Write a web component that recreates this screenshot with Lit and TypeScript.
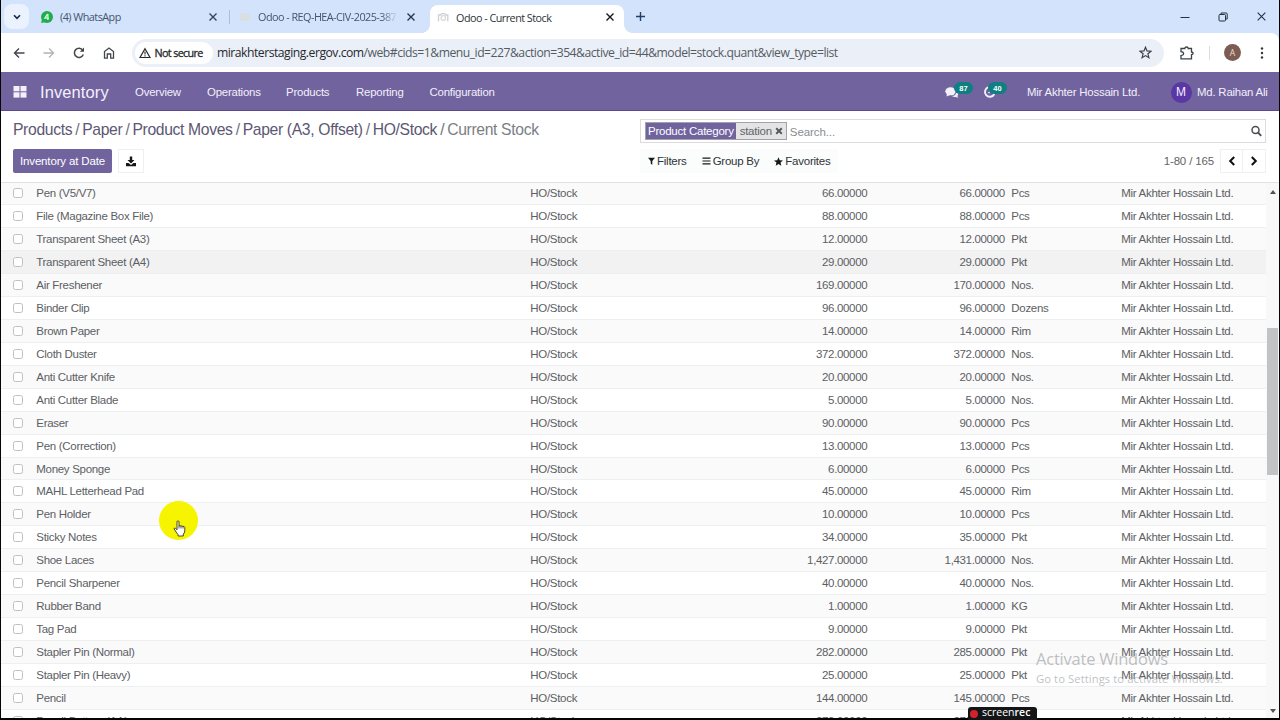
import { LitElement, html, css } from "lit";
import { customElement } from "lit/decorators.js";

type Row = [string, string, string, string];

const ROWS: Row[] = [
  ["Pen (V5/V7)", "66.00000", "66.00000", "Pcs"],
  ["File (Magazine Box File)", "88.00000", "88.00000", "Pcs"],
  ["Transparent Sheet (A3)", "12.00000", "12.00000", "Pkt"],
  ["Transparent Sheet (A4)", "29.00000", "29.00000", "Pkt"],
  ["Air Freshener", "169.00000", "170.00000", "Nos."],
  ["Binder Clip", "96.00000", "96.00000", "Dozens"],
  ["Brown Paper", "14.00000", "14.00000", "Rim"],
  ["Cloth Duster", "372.00000", "372.00000", "Nos."],
  ["Anti Cutter Knife", "20.00000", "20.00000", "Nos."],
  ["Anti Cutter Blade", "5.00000", "5.00000", "Nos."],
  ["Eraser", "90.00000", "90.00000", "Pcs"],
  ["Pen (Correction)", "13.00000", "13.00000", "Pcs"],
  ["Money Sponge", "6.00000", "6.00000", "Pcs"],
  ["MAHL Letterhead Pad", "45.00000", "45.00000", "Rim"],
  ["Pen Holder", "10.00000", "10.00000", "Pcs"],
  ["Sticky Notes", "34.00000", "35.00000", "Pkt"],
  ["Shoe Laces", "1,427.00000", "1,431.00000", "Nos."],
  ["Pencil Sharpener", "40.00000", "40.00000", "Nos."],
  ["Rubber Band", "1.00000", "1.00000", "KG"],
  ["Tag Pad", "9.00000", "9.00000", "Pkt"],
  ["Stapler Pin (Normal)", "282.00000", "285.00000", "Pkt"],
  ["Stapler Pin (Heavy)", "25.00000", "25.00000", "Pkt"],
  ["Pencil", "144.00000", "145.00000", "Pcs"],
  ["Pencil Battery (AA)", "270.00000", "270.00000", "Pcs"],
];

const cross = (c: string, s = 10, w = 1.4) => html`<svg width=${s} height=${s} viewBox="0 0 10 10">
  <path d="M1.5 1.5 8.5 8.5M8.5 1.5 1.5 8.5" stroke=${c} stroke-width=${w} fill="none" /></svg>`;

@customElement("browser-chrome")
class BrowserChrome extends LitElement {
  static styles = css`
    :host { display: block; font-family: "Open Sans", "Noto Sans", sans-serif; }
    svg { display: block; flex: none; }
    .tabs { height: 33px; background: #d2e3fb; display: flex; align-items: center; }
    .tabs > * { flex: none; }
    .drop { width: 25px; height: 25px; margin-left: 3px; border-radius: 8px; background: #e9f2fe; display: grid; place-items: center; }
    .tab { display: flex; align-items: center; font-size: 10.8px; color: #44546c; white-space: nowrap; height: 33px; }
    .t1 { width: 178px; margin-left: 11px; }
    .wa { width: 14px; height: 14px; margin-right: 6px; }
    .lab { letter-spacing: -0.52px; }
    .grow { flex: 1; overflow: hidden; }
    .sep { width: 1px; height: 14px; background: #a9bfdd; margin: 0 10px 0 11px; flex: none; }
    .t2 { width: 198px; }
    .fade { -webkit-mask-image: linear-gradient(90deg, #000 88%, transparent 100%); margin-right: 8px; }
    .fav { width: 10px; height: 8px; margin-right: 8px; background: #d8dfe2; border-radius: 2px; flex: none; }
    .active { align-self: flex-end; height: 28px; width: 194px; margin-left: 14px; background: #fff; border-radius: 8px 8px 0 0; padding: 0 9px 4px 7px;
      box-sizing: border-box; color: #2f3338; position: relative; gap: 7px; }
    .active::before, .active::after { content: ""; position: absolute; bottom: 0; width: 8px; height: 8px; }
    .active::before { left: -8px; background: radial-gradient(circle at 0 0, transparent 7.5px, #fff 8px); }
    .active::after { right: -8px; background: radial-gradient(circle at 100% 0, transparent 7.5px, #fff 8px); }
    .tabs .win { margin-left: auto; display: flex; gap: 28px; margin-right: 12.5px; align-items: center; }
    .plus { margin-left: 11px; }
    .bar { height: 39px; background: #fff; display: flex; align-items: center; border-top-right-radius: 8px; }
    .wrap { background: #d2e3fb; }
    .nav { display: flex; gap: 14px; margin-left: 9.5px; width: 121px; }
    .addr { height: 28px; flex: 1; background: #ebf0f8; border-radius: 14px; display: flex; align-items: center; padding-left: 3px; box-sizing: border-box; }
    .chip { height: 22px; width: 74px; border-radius: 11px; background: #fff; display: flex; align-items: center; padding-left: 4px; gap: 4px; font-size: 10.8px; color: #26282b; white-space: nowrap; letter-spacing: -0.65px; -webkit-text-stroke: 0.3px #26282b; }
    .url { margin-left: 4.5px; font-size: 12.2px; letter-spacing: -0.5px; color: #555b62; white-space: nowrap; flex: 1; }
    .host { color: #26292d; }
    .star { margin-right: 12px; }
    .right { display: flex; align-items: center; width: 115px; box-sizing: border-box; padding-left: 15px; }
    .vr { width: 1px; height: 14px; background: #d8dde4; margin: 0 14px 0 14px; }
    .av { width: 17px; height: 17px; border-radius: 50%; background: #7d5d53; color: #f0dcd2; font-size: 8.5px; display: grid; place-items: center; margin-right: 19px; }
  `;
  render() {
    return html`
      <div class="tabs">
        <div class="drop"><svg width="8" height="6" viewBox="0 0 8 6"><path d="M1 1.2 4 4.4 7 1.2" fill="none" stroke="#1d2a3c" stroke-width="1.6"/></svg></div>
        <div class="tab t1">
          <svg class="wa" viewBox="0 0 14 14"><circle cx="7" cy="7" r="6" fill="#1fae4c"/><path d="M1 13 2 9.6 5 12.3Z" fill="#1fae4c"/>
            <path d="M7.6 3.8 4.9 8.2H9M7.9 4v6" fill="none" stroke="#d9f7e2" stroke-width="1.3"/></svg>
          <span class="lab grow">(4) WhatsApp</span>${cross("#33445c")}
        </div>
        <div class="tab t2"><span class="sep"></span><span class="fav"></span><span class="lab grow fade">Odoo - REQ-HEA-CIV-2025-387</span>${cross("#26364d")}</div>
        <div class="tab active">
          <svg width="12" height="11" viewBox="0 0 12 11"><path d="M2.300 8.500H1.500V3h2.300L4.800 1.700h3L8.800 3h2v5.500H10" fill="none" stroke="#cdd0d4" stroke-width="1.300"/><circle cx="6.300" cy="6" r="2.300" fill="none" stroke="#d5d8dc" stroke-width="1.200"/></svg>
          <span class="lab grow">Odoo - Current Stock</span>${cross("#15181c")}
        </div>
        <svg class="plus" width="11" height="11" viewBox="0 0 11 11"><path d="M5.500 1v9M1 5.500h9" stroke="#22406a" stroke-width="1.400"/></svg>
        <div class="win">
          <svg width="10" height="10" viewBox="0 0 10 10"><path d="M.5 5.500h9" stroke="#26313f"/></svg>
          <svg width="10" height="10" viewBox="0 0 10 10"><rect x="1" y="2.500" width="6.500" height="6.500" rx="1" fill="none" stroke="#26313f"/><path d="M3 2.200V1h5.200q1 0 1 1v5H8" fill="none" stroke="#26313f"/></svg>
          ${cross("#26313f", 11, 1)}
        </div>
      </div>
      <div class="wrap"><div class="bar">
        <div class="nav">
          <svg width="16" height="16" viewBox="0 0 16 16"><path d="M13.500 8H4M8 3.500 3.500 8 8 12.500" fill="none" stroke="#43474c" stroke-width="1.400"/></svg>
          <svg width="16" height="16" viewBox="0 0 16 16"><path d="M2.500 8H12M8 3.500 12.500 8 8 12.500" fill="none" stroke="#b0b3b8" stroke-width="1.300"/></svg>
          <svg width="16" height="16" viewBox="0 0 16 16"><path d="M12.300 9.500A4.600 4.600 0 1 1 11.800 5.200" fill="none" stroke="#43474c" stroke-width="1.500"/><path d="M13 2.500V6.800H8.800Z" fill="#43474c"/></svg>
          <svg width="16" height="16" viewBox="0 0 16 16"><path d="M3.500 13.200V6.500L8 3l4.500 3.500v6.700H9.700V9H6.300v4.200Z" fill="none" stroke="#43474c" stroke-width="1.300"/></svg>
        </div>
        <div class="addr">
          <div class="chip"><svg width="12" height="12" viewBox="0 0 12 12"><path d="M6 1.700 11 10.500H1Z" fill="none" stroke="#26282b" stroke-width="1.200"/><path d="M6 4.500v3M6 8.200v1.200" stroke="#26282b" stroke-width="1.100"/></svg>Not secure</div>
          <div class="url"><span class="host">mirakhterstaging.ergov.com</span>/web#cids=1&amp;menu_id=227&amp;action=354&amp;active_id=44&amp;model=stock.quant&amp;view_type=list</div>
          <svg class="star" width="13" height="13" viewBox="0 0 13 13"><path d="M6.500 1.200 8 4.900 12 5.200 8.900 7.800 9.900 11.700 6.500 9.600 3.100 11.700 4.100 7.800 1 5.200 5 4.900Z" fill="none" stroke="#3c4248" stroke-width="1.200"/></svg>
        </div>
        <div class="right">
          <svg width="16" height="16" viewBox="0 0 16 16"><path d="M2 3.500H5.800q0-1.500 1.700-1.500T9.200 3.500h3.300V7q1.600 0 1.600 1.300T12.500 9.600V13.800H2V10.600Q4.600 10.300 4.600 8.600T2 6.600Z" fill="none" stroke="#3c4248" stroke-width="1.300"/></svg>
          <span class="vr"></span><span class="av">A</span>
          <svg width="4" height="14" viewBox="0 0 4 14"><g fill="#33373c"><circle cx="2" cy="2.500" r="1.200"/><circle cx="2" cy="7" r="1.200"/><circle cx="2" cy="11.500" r="1.200"/></g></svg>
        </div>
      </div></div>`;
  }
}

@customElement("odoo-nav")
class OdooNav extends LitElement {
  static styles = css`
    :host { display: grid; height: 39px; box-sizing: border-box; background: #71639e; border-bottom: 1px solid #5a4a8a; color: #f3f0fb;
      grid-template-columns: 12px 27px 95px 72px 79px 70px 73.500px 1fr 38px 44px 143.500px 26.500px 82px; align-items: center; padding-top: 2px;
      font: 11.4px "Liberation Sans", Arial, sans-serif; letter-spacing: -0.2px; white-space: nowrap; }
    .brand { font-size: 16.5px; letter-spacing: 0.1px; }
    svg { display: block; }
    .ic { position: relative; height: 14px; }
    .badge { position: absolute; left: 9px; top: -3px; width: 19px; height: 12px; border-radius: 6px; background: #0f7f81; color: #fff; font-size: 7.5px; font-weight: bold; letter-spacing: 0; display: grid; place-items: center; }
    .act .badge { left: 5px; }
    .m { width: 21px; height: 21px; border-radius: 50%; background: #5a37a5; display: grid; place-items: center; font-size: 12px; }
  `;
  render() {
    return html`<span></span>
      <svg width="14" height="12" viewBox="0 0 14 12"><g fill="#f3f0fb"><rect x="0.500" y="0" width="6" height="5.300"/><rect x="7.500" y="0" width="6" height="5.300"/><rect x="0.500" y="6.300" width="6" height="5.300"/><rect x="7.500" y="6.300" width="6" height="5.300"/></g></svg>
      <span class="brand">Inventory</span><span>Overview</span><span>Operations</span><span>Products</span><span>Reporting</span><span>Configuration</span>
      <div class="ic"><svg width="14" height="14" viewBox="0 0 14 14"><g fill="#f3f0fb"><ellipse cx="5.500" cy="6.300" rx="5.200" ry="4"/><path d="M1.500 11.500 2 8.500 5 10Z"/><path d="M7 11Q11 11 11.400 6.500 13.300 7.500 13.200 9.300 13 10.500 12.300 11L13.300 12.800 10.600 12Q8.500 12.300 7 11Z"/></g></svg><span class="badge">87</span></div>
      <div class="ic act"><svg width="14" height="14" viewBox="0 0 14 14"><path d="M5.500 2.200A4.900 4.900 0 1 0 11.300 9" fill="none" stroke="#f3f0fb" stroke-width="1.900"/><path d="M7 5V7.700H5" fill="none" stroke="#f3f0fb"/></svg><span class="badge">40</span></div>
      <span>Mir Akhter Hossain Ltd.</span><span class="m">M</span><span>Md. Raihan Ali</span>`;
  }
}

@customElement("control-panel")
class ControlPanel extends LitElement {
  static styles = css`
    :host { display: grid; grid-template-columns: 627px 626px; height: 72px; box-sizing: border-box; padding: 8px 0 0 12px;
      grid-template-rows: 26px 1fr; background: #fff; border-bottom: 1px solid #e2e2e2; font: 11.5px "Liberation Sans", Arial, sans-serif; letter-spacing: -0.24px; color: #5f6468; white-space: nowrap; }
    svg { display: block; }
    .crumbs { font-size: 15.7px; letter-spacing: -0.34px; color: #5c5773; line-height: 22px; }
    .crumbs i { font-style: normal; color: #6f7378; margin: 0 3px; }
    .crumbs b { font-weight: normal; color: #7b7f84; }
    .search { height: 24px; border: 1px solid #dcdcdc; display: flex; align-items: center; box-sizing: border-box; padding: 0 3px 0 4px; }
    .facet { display: flex; height: 18px; line-height: 16px; box-sizing: border-box; border: 1px solid #a3a1ad; background: #e4e4e5; }
    .facet span { background: #71639e; color: #fff; padding: 0 2px; }
    .val { display: flex; align-items: center; gap: 3px; padding: 0 3px 0 4px; }
    .ph { margin-left: 3px; flex: 1; color: #898d91; padding-top: 2px; letter-spacing: -0.1px; }
    .btns { display: flex; gap: 6px; padding-top: 4px; }
    .primary { width: 99px; height: 24px; border-radius: 2px; background: #71639e; color: #fff; display: grid; place-items: center; letter-spacing: -0.15px; }
    .ghost { width: 26px; height: 24px; border: 1px solid #f0f0f0; box-sizing: border-box; display: grid; place-items: center; }
    .tools { display: flex; align-items: center; height: 24px; margin-top: 4px; color: #303438; }
    .opts { display: flex; height: 24px; align-items: center; padding: 0 8px; gap: 15px; background: #fbfcfc; }
    .opts span { display: flex; align-items: center; gap: 2px; }
    .pager { margin-left: auto; display: flex; align-items: center; color: #5f6468; letter-spacing: -0.15px; }
    .pager .ghost { width: 23px; }
    .pager .p { margin-left: 6px; } .pager .n { border-left: 0; }
  `;
  render() {
    const s = html`<i>/</i>`;
    return html`
      <div class="crumbs">Products${s}Paper${s}Product Moves${s}Paper (A3, Offset)${s}HO/Stock${s}<b>Current Stock</b></div>
      <div class="search">
        <div class="facet"><span>Product Category</span><div class="val">station ${cross("#55595d", 8, 2.4)}</div></div>
        <div class="ph">Search...</div>
        <svg width="12" height="12" viewBox="0 0 12 12"><circle cx="5.500" cy="5" r="3.500" fill="none" stroke="#4a4e52" stroke-width="1.500"/><path d="M8 7.500 11.200 10.800" stroke="#4a4e52" stroke-width="1.800"/></svg>
      </div>
      <div class="btns"><div class="primary">Inventory at Date</div><div class="ghost">
        <svg width="12" height="11" viewBox="0 0 12 11"><path d="M4.800 0.500h2.400v3.500h2.300L6 7.500 2.500 4h2.300Z" fill="#15171a"/><path d="M1 7h2.500L6 9 8.500 7H11v3.300H1Z" fill="#15171a"/></svg></div></div>
      <div class="tools"><div class="opts">
          <span><svg width="7" height="8" viewBox="0 0 7 8"><path d="M0 .8h7L4.300 4V8L2.700 6.500V4Z" fill="#16181b"/></svg>Filters</span>
          <span><svg width="9" height="8" viewBox="0 0 9 8"><path d="M.5 1.200h8M.5 4h8M.5 6.800h8" stroke="#16181b" stroke-width="1.200"/></svg>Group By</span>
          <span><svg width="9" height="9" viewBox="0 0 10 10"><path d="M5 .3 6.400 3.500 10 3.800 7.300 6.200 8.100 9.700 5 7.800 1.900 9.700 2.700 6.200 0 3.800 3.600 3.500Z" fill="#16181b"/></svg>Favorites</span>
        </div>
        <div class="pager">1-80 / 165
          <div class="ghost p"><svg width="8" height="10" viewBox="0 0 8 10"><path d="M6.200 1 2.200 5 6.200 9" fill="none" stroke="#0d0f11" stroke-width="2"/></svg></div>
          <div class="ghost n"><svg width="8" height="10" viewBox="0 0 8 10"><path d="M1.800 1 5.800 5 1.800 9" fill="none" stroke="#0d0f11" stroke-width="2"/></svg></div>
        </div>
      </div>`;
  }
}

@customElement("stock-list")
class StockList extends LitElement {
  static styles = css`
    :host { display: grid; grid-template-columns: 1fr 13px; overflow: hidden; background: #fff; font: 11.5px "Liberation Sans", Arial, sans-serif; letter-spacing: -0.3px; color: #5c6064; }
    .rows { overflow: hidden; }
    .list { margin-top: -0.5px; }
    .row { display: grid; grid-template-columns: 35.300px 494px 200px 137px 137.500px 6.500px 110px 1fr; height: 22.93px; box-sizing: border-box;
      border-bottom: 1px solid #eeefef; align-items: center; white-space: nowrap; }
    .row:nth-child(odd) { background: #fafafa; }
    .row.hover { background: #f2f2f3; }
    .num { text-align: right; letter-spacing: -0.34px; }
    .box { width: 10px; height: 10px; box-sizing: border-box; border: 1px solid #bdc0c4; border-radius: 2.500px; margin-left: 12px; background: #fff; }
    .bar { background: #f8f8f9; display: grid; grid-template-rows: 17px 128px 147px 1fr 14px; justify-items: center; align-items: center; }
    .thumb { width: 11px; height: 147px; background: #c2c3c4; }
    .up, .down { border: 3px solid transparent; width: 0; height: 0; }
    .up { border-bottom: 4px solid #505357; border-top: 0; }
    .down { border-top: 4px solid #505357; border-bottom: 0; }
  `;
  render() {
    return html`<div class="rows"><div class="list">${ROWS.map(
      ([name, available, onHand, unit], i) => html`<div class="row ${i === 3 ? "hover" : ""}">
        <span class="box"></span><span>${name}</span><span>HO/Stock</span><span class="num">${available}</span><span class="num">${onHand}</span><span></span><span>${unit}</span><span>Mir Akhter Hossain Ltd.</span>
      </div>`
    )}</div></div>
    <div class="bar"><span class="up"></span><span></span><span class="thumb"></span><span></span><span class="down"></span></div>`;
  }
}

@customElement("app-root")
class AppRoot extends LitElement {
  static styles = css`
    :host { display: grid; grid-template-rows: 72px 39px 72px minmax(0, 1fr); width: 1280px; height: 720px; box-sizing: border-box; padding: 0 1px 2px; background: #050505; position: relative; overflow: hidden; }
    .mark { position: absolute; left: 1036px; top: 648px; font: 16.5px/22px "Open Sans", sans-serif; letter-spacing: -0.22px; color: rgba(135, 138, 142, 0.55); white-space: nowrap; }
    .mark div + div { font-size: 11.3px; line-height: 17px; letter-spacing: 0.05px; }
    .rec { position: absolute; left: 968px; top: 707px; width: 69px; height: 13px; border-radius: 3px 3px 0 0; background: #141516; color: #fff; font: 10.5px/11px "Open Sans", sans-serif; display: flex; align-items: flex-start; gap: 4px; padding-left: 2px; box-sizing: border-box; white-space: nowrap; }
    .dot { width: 8px; height: 8px; margin-top: 3px; border-radius: 50%; background: #d2222d; }
    .rec b { font-weight: 600; }
    .halo { position: absolute; left: 158.500px; top: 501px; width: 39px; height: 39px; border-radius: 50%; background: #f7f400; }
    .hand { position: absolute; left: 173px; top: 520px; }
  `;
  render() {
    return html`<browser-chrome></browser-chrome><odoo-nav></odoo-nav><control-panel></control-panel><stock-list></stock-list>
      <div class="mark"><div>Activate Windows</div><div>Go to Settings to activate Windows.</div></div>
      <div class="rec"><span class="dot"></span><span>screen<b>rec</b></span></div>
      <div class="halo"></div>
      <svg class="hand" width="14" height="17" viewBox="0 0 14 17"><path d="M4 1.700Q4.200.8 5 .8T6 1.700V6Q7 5.200 8 6.200 9 5.400 10 6.500 11.300 6 11.800 7.300V11Q11.500 13.500 10.300 14V16H5V14.500Q3.500 13 2.500 11L1 8.800Q1.300 7.500 2.500 8.200L4 9.800Z" fill="#fff" stroke="#33331c" stroke-width="0.900"/><path d="M6 6v2.500M8 6.200v2.300M10 6.500v2" stroke="#33331c" stroke-width="0.800"/></svg>`;
  }
}
